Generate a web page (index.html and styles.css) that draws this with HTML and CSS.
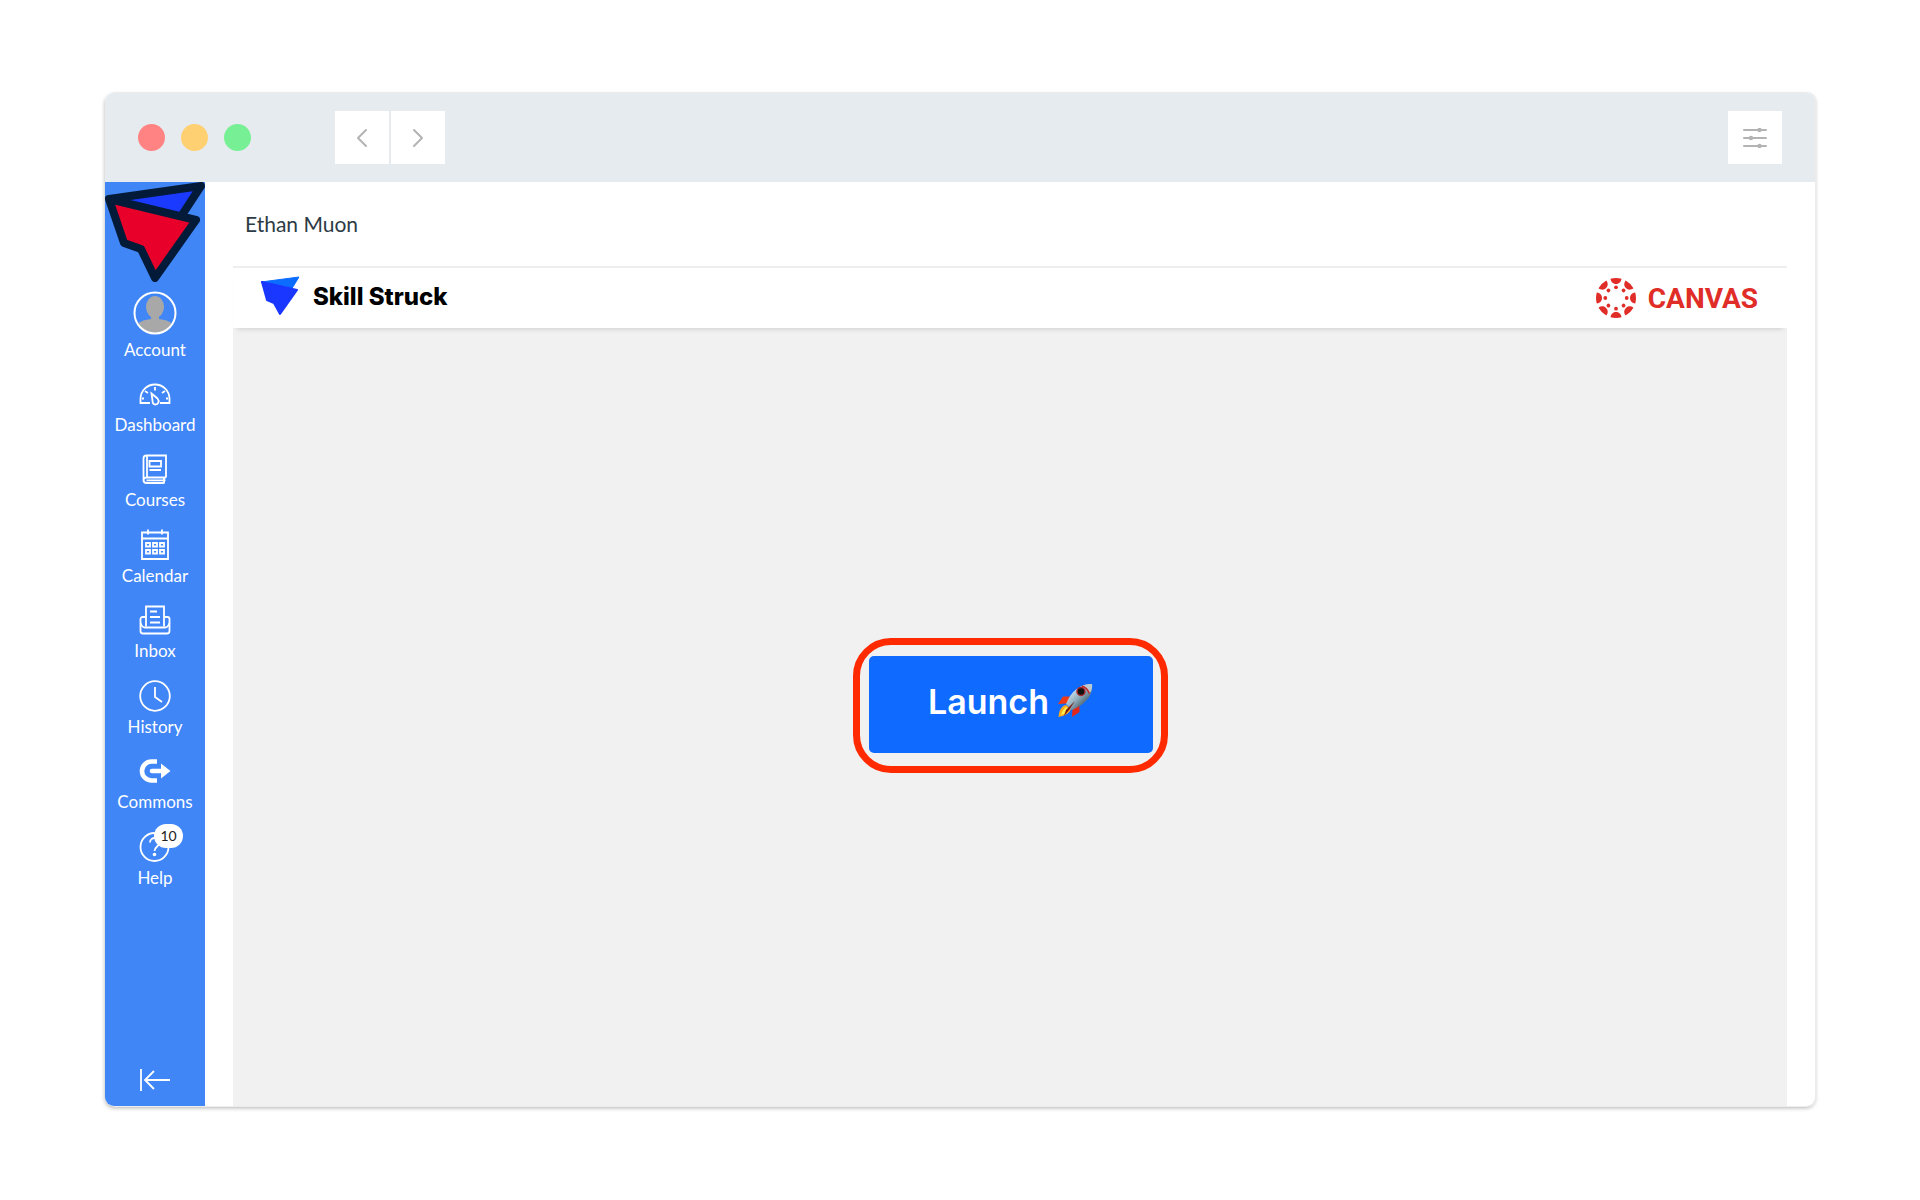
FILE: index.html
```html
<!DOCTYPE html>
<html lang="en">
<head>
    <meta charset="UTF-8">
    <meta name="viewport" content="width=device-width, initial-scale=1.0">
    <title>Skill Struck</title>
    <link rel="stylesheet" href="styles.css">
</head>
<body>
    <div class="window">
        <div class="titlebar">
            <div class="dots">
                <span class="dot red"></span>
                <span class="dot yellow"></span>
                <span class="dot green"></span>
            </div>
            <div class="history-buttons">
                <button class="tool-button" aria-label="Back">
                    <svg width="12" height="20" viewBox="0 0 12 20"><path d="M10 2L2 10l8 8"/></svg>
                </button>
                <button class="tool-button" aria-label="Forward">
                    <svg width="12" height="20" viewBox="0 0 12 20"><path d="M2 2l8 8-8 8"/></svg>
                </button>
            </div>
            <button class="tool-button settings" aria-label="Settings">
                <svg width="24" height="20" viewBox="0 0 24 20">
                    <path d="M1 2h22M1 10h22M1 18h22"/>
                    <circle cx="16.500" cy="2" r="2.200"/>
                    <circle cx="8" cy="10" r="2.200"/>
                    <circle cx="16.500" cy="18" r="2.200"/>
                </svg>
            </button>
        </div>

        <div class="page">
            <nav class="sidebar">
                <a class="brand" href="#" aria-label="Home">
                    <svg viewBox="0 0 100 100">
                        <path d="M4 17L96 4 77 33z" fill="#1a3aff"/>
                        <path d="M4 17L91 38 50 96 36 67 19 61z" fill="#e8002a"/>
                        <path d="M4 17L96 4 77 33M4 17L91 38 50 96 36 67 19 61z" fill="none" stroke="#031a38" stroke-width="8" stroke-linejoin="round" stroke-linecap="round"/>
                    </svg>
                </a>
                <a class="nav-item account" href="#">
                    <svg class="avatar" viewBox="0 0 44 44">
                        <defs><clipPath id="face"><circle cx="22" cy="22" r="20"/></clipPath></defs>
                        <g clip-path="url(#face)" fill="#a8a8a8">
                            <ellipse cx="22" cy="16" rx="9" ry="11"/>
                            <path d="M18 24h8v4c8 1 13 3 14 7v9H4v-9c1-4 6-6 14-7z"/>
                        </g>
                        <circle cx="22" cy="22" r="20.500" fill="none" stroke="#fff" stroke-width="2"/>
                    </svg>
                    <span>Account</span>
                </a>
                <div class="nav-list">
                    <a class="nav-item" href="#">
                        <svg class="icon" viewBox="0 0 32 32">
                            <path d="M11 25H1.500v-4C1.500 12.500 8 6.500 16 6.500S30.500 12.500 30.500 21v4H21"/>
                            <path d="M16 9v3.500M6 13l3 2M26 13l-3 2M3 20.500h2M29 20.500h-2M12.500 15.500l6 5c2.500 3 .5 6-2 6s-3-2-3-4z"/>
                        </svg>
                        <span>Dashboard</span>
                    </a>
                    <a class="nav-item" href="#">
                        <svg class="icon" viewBox="0 0 32 32">
                            <path d="M27 24.500V2.500H7.500c-2 0-3 1-3 3v21c0 2 1 3.500 3 3.500h18M27 24.500H7.500c-4 0-4 5.500 0 5.500M7.500 27.300h19M25 24.500V30M8 3v21"/>
                            <path d="M10.500 8H22v5.500H10.500zM10.500 17H22"/>
                        </svg>
                        <span>Courses</span>
                    </a>
                    <a class="nav-item" href="#">
                        <svg class="icon" viewBox="0 0 32 32">
                            <path d="M3 3.500h26V30H3zM3 9.500h26M9 .5v5M23 .5v5"/>
                            <path d="M7 14h4v3.500H7zM14 14h4v3.500h-4zM21 14h4v3.500h-4zM7 21h4v3.500H7zM14 21h4v3.500h-4zM21 21h4v3.500h-4z"/>
                        </svg>
                        <span>Calendar</span>
                    </a>
                    <a class="nav-item" href="#">
                        <svg class="icon" viewBox="0 0 32 32">
                            <path d="M7 22.500V2.500h18v20M7 13H3.500c-1 0-2 1-2 2v12c0 1.500 1 2.500 2.500 2.500h24c1.500 0 2.500-1 2.500-2.500V15c0-1-1-2-2-2H25"/>
                            <path d="M1.500 19c1 3 2 4.500 4.500 4.500h20c2.500 0 3.500-1.500 4.500-4.500M11 7.500h7M11 13h10M11 18.500h10"/>
                        </svg>
                        <span>Inbox</span>
                    </a>
                    <a class="nav-item" href="#">
                        <svg class="icon" viewBox="0 0 32 32">
                            <circle cx="16" cy="16" r="14.800"/>
                            <path d="M16 7v10l7 5"/>
                        </svg>
                        <span>History</span>
                    </a>
                    <a class="nav-item" href="#">
                        <svg class="icon" viewBox="0 0 32 32">
                            <path class="thick" d="M18 6.500h-5.500a9.500 9.500 0 0 0 0 19H18"/>
                            <path class="thick" d="M13 16h11" stroke-linecap="round"/>
                            <path class="solid" d="M22 8.500l9.500 7.500-9.500 7.500z"/>
                        </svg>
                        <span>Commons</span>
                    </a>
                    <a class="nav-item" href="#">
                        <svg class="icon" viewBox="0 0 32 32">
                            <circle cx="15.500" cy="16" r="14"/>
                            <path d="M11 11.500c0-6 9.500-6 9.500 0 0 4-5 4-5 8.500"/>
                            <circle class="solid" cx="15.500" cy="23.500" r="1.800"/>
                        </svg>
                        <span class="badge">10</span>
                        <span>Help</span>
                    </a>
                </div>
                <button class="collapse" aria-label="Minimize navigation">
                    <svg viewBox="0 0 32 24"><path d="M2 1v22M31 12H6M15 3l-9 9 9 9"/></svg>
                </button>
            </nav>

            <main class="content">
                <header class="user-name">Ethan Muon</header>
                <div class="app-bar">
                    <div class="skill-struck">
                        <svg viewBox="0 0 38 40">
                            <path d="M0 6L38 1 30 14z" fill="#0b6cff" stroke="#0b6cff" stroke-linejoin="round"/>
                            <path d="M1 6L36 14 19 38 13 27 6 24z" fill="#1a37ff" stroke="#1a37ff" stroke-width="2" stroke-linejoin="round"/>
                        </svg>
                        <span>Skill Struck</span>
                    </div>
                    <div class="canvas-logo">
                        <svg viewBox="-20 -20 40 40">
                            <defs>
                                <g id="spoke">
                                    <path d="M-5.500 -19.200A20 20 0 0 1 5.500 -19.200C5 -15.500 2.500 -14 0 -14S-5 -15.500 -5.500 -19.200z"/>
                                    <circle cy="-10.700" r="1.900"/>
                                </g>
                            </defs>
                            <use href="#spoke"/>
                            <use href="#spoke" transform="rotate(45)"/>
                            <use href="#spoke" transform="rotate(90)"/>
                            <use href="#spoke" transform="rotate(135)"/>
                            <use href="#spoke" transform="rotate(180)"/>
                            <use href="#spoke" transform="rotate(225)"/>
                            <use href="#spoke" transform="rotate(270)"/>
                            <use href="#spoke" transform="rotate(315)"/>
                        </svg>
                        <span>CANVAS</span>
                    </div>
                </div>
                <div class="stage">
                    <div class="highlight">
                        <button class="launch">
                            <span>Launch</span>
                            <svg viewBox="0 0 36 36">
                                <defs>
                                    <linearGradient id="hull" x1="0" y1="0" x2="1" y2="1">
                                        <stop offset=".2" stop-color="#dbe9f0"/>
                                        <stop offset=".5" stop-color="#8fadbd"/>
                                        <stop offset=".8" stop-color="#3d5260"/>
                                    </linearGradient>
                                </defs>
                                <path d="M13 13.500L6 13.500 1 21l9-.5z" fill="#f03a17"/>
                                <path d="M22.500 22v7L15 34l.5-8z" fill="#e3261b"/>
                                <path d="M9 22c-5 1-7 6-7.500 12C7 33 12 31 14 26z" fill="#ffab1a"/>
                                <path d="M9 24c-3 2-4 5-5 8 4-1 6-3 8-6z" fill="#fff04f"/>
                                <path d="M35 1c1 10-4 19-20 26l-6-6C14 8 23 1 35 1z" fill="url(#hull)"/>
                                <path d="M35 1c-4 0-7 .6-10 2 3 1 6 4 7.500 7.500C35 7 35.500 4 35 1z" fill="#b8cbd5"/>
                                <path d="M25 3c3 1 6 4 7.500 7.500" fill="none" stroke="#c32424" stroke-width="1.500"/>
                                <circle cx="24" cy="8.500" r="4" fill="#111" stroke="#a82a2f" stroke-width="1.500"/>
                                <path d="M9 27l9-9-6 9-5 6z" fill="#7c1410"/>
                            </svg>
                        </button>
                    </div>
                </div>
            </main>
        </div>
    </div>
</body>
</html>
```

FILE: styles.css
```css
* {
    box-sizing: border-box;
}

body {
    margin: 0;
    min-height: 100vh;
    padding: 93px 105px 94px;
    display: flex;
    background: #fff;
    font-family: Lato, sans-serif;
}

button {
    border: none;
    padding: 0;
    cursor: pointer;
}

a {
    color: inherit;
    text-decoration: none;
}

svg {
    display: block;
}

.window {
    flex: 1;
    display: flex;
    flex-direction: column;
    border-radius: 9px;
    overflow: hidden;
    background: #fff;
    box-shadow: 1px 0 0 1px #ececec, 0 2px 4px rgba(0, 0, 0, 0.3);
}

/* Browser bar */
.titlebar {
    display: flex;
    align-items: center;
    height: 89px;
    padding: 0 33px;
    background: #e6ebef;
}

.dots {
    display: flex;
    gap: 16px;
    margin-right: 84px;
}

.dot {
    width: 27px;
    height: 27px;
    border-radius: 50%;
}

.red {
    background: #ff8383;
}

.yellow {
    background: #ffd072;
}

.green {
    background: #77ef94;
}

.history-buttons {
    display: flex;
    gap: 2px;
}

.tool-button {
    display: flex;
    align-items: center;
    justify-content: center;
    width: 54px;
    height: 53px;
    background: #fff;
}

.tool-button svg {
    fill: none;
    stroke: #b3b3b3;
    stroke-width: 2;
    stroke-linecap: round;
    stroke-linejoin: round;
}

.tool-button circle {
    fill: #b3b3b3;
    stroke: none;
}

.settings {
    margin-left: auto;
}

.page {
    flex: 1;
    display: flex;
}

/* Global navigation */
.sidebar {
    display: flex;
    flex-direction: column;
    width: 100px;
    background: #4086f7;
    color: #fff;
}

.nav-list {
    display: grid;
    grid-auto-rows: 1fr;
    height: 528px;
}

.nav-item {
    position: relative;
    display: flex;
    flex-direction: column;
    align-items: center;
    gap: 4px;
    font-size: 17px;
    line-height: 22px;
}

.account {
    height: 96px;
    padding-top: 9px;
}

.avatar {
    width: 44px;
    height: 44px;
}

.icon {
    width: 32px;
    height: 32px;
    fill: none;
    stroke: #fff;
    stroke-width: 1.8;
}

.icon .thick {
    stroke-width: 4.6;
}

.icon .solid {
    fill: #fff;
    stroke: none;
}

.badge {
    position: absolute;
    top: -7px;
    left: 49px;
    width: 29px;
    border-radius: 12px;
    background: #fff;
    color: #222;
    font-size: 14px;
    line-height: 24px;
    text-align: center;
}

.collapse {
    display: flex;
    align-items: center;
    justify-content: center;
    height: 52px;
    margin-top: auto;
    background: none;
}

.collapse svg {
    width: 32px;
    height: 24px;
    fill: none;
    stroke: #fff;
    stroke-width: 1.8;
}

/* Course page */
.content {
    flex: 1;
    display: flex;
    flex-direction: column;
    padding: 0 28px;
}

.user-name {
    padding: 0 12px;
    border-bottom: 2px solid #eee;
    color: #2d3b45;
    font-size: 21px;
    line-height: 84px;
}

.app-bar {
    z-index: 1;
    display: flex;
    align-items: center;
    justify-content: space-between;
    height: 60px;
    padding: 0 29px 0 28px;
    background: #fff;
    box-shadow: 0 5px 5px -4px rgba(0, 0, 0, 0.15);
}

.skill-struck {
    display: flex;
    align-items: center;
    gap: 14px;
    padding-bottom: 4px;
    color: #000;
    font-family: Inter, sans-serif;
    font-size: 24px;
    font-weight: 800;
}

.skill-struck svg {
    width: 38px;
    height: 40px;
}

.canvas-logo {
    display: flex;
    align-items: center;
    gap: 12px;
    color: #e02d27;
    font-family: Roboto, sans-serif;
    font-size: 28px;
    font-weight: 700;
}

.canvas-logo svg {
    width: 40px;
    height: 40px;
    fill: #e02d27;
}

.stage {
    flex: 1;
    display: flex;
    align-items: center;
    justify-content: center;
    padding-bottom: 24px;
    background: #f1f1f1;
}

.highlight {
    padding: 11px 8px 13px 9px;
    border: 7px solid #ff2a00;
    border-radius: 38px;
}

.launch {
    display: flex;
    align-items: center;
    justify-content: center;
    gap: 8px;
    width: 284px;
    height: 97px;
    padding-bottom: 6px;
    border-radius: 5px;
    background: #0f6bff;
    color: #fff;
    font-family: Inter, sans-serif;
    font-size: 34px;
    font-weight: 600;
}

.launch svg {
    width: 36px;
    height: 36px;
}
```
